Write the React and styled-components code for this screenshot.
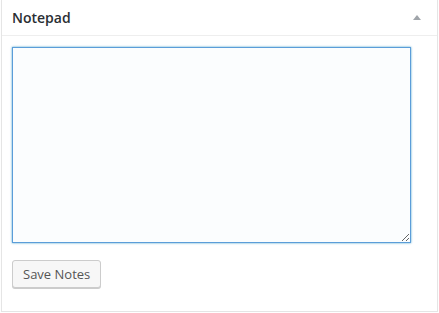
import React from 'react'
import styled, { createGlobalStyle } from 'styled-components'

const Global = createGlobalStyle`
  body {
    margin: 0;
    background: #fff;
    font-family: "Open Sans", "Liberation Sans", sans-serif;
  }
`

const Widget = styled.div`
  box-sizing: border-box;
  margin-left: 1px;
  width: 437px;
  height: 312px;
  background: #fff;
  border: 1px solid #e5e5e5;
  border-top: none;
  box-shadow: 0 1px 1px rgba(0, 0, 0, 0.04);
`

const Header = styled.div`
  display: flex;
  align-items: center;
  justify-content: space-between;
  height: 35px;
  padding: 0 10px;
  border-bottom: 1px solid #eee;
`

const Title = styled.h2`
  margin: 0;
  font-size: 14px;
  font-weight: 600;
  color: #2a2e33;
  line-height: 1.4;
`

const Toggle = styled.span`
  width: 0;
  height: 0;
  margin-right: 6px;
  border-left: 4px solid transparent;
  border-right: 4px solid transparent;
  border-bottom: 5px solid #a0a5aa;
`

const Inside = styled.div`
  display: flex;
  flex-direction: column;
  align-items: flex-start;
  padding: 11px 27px 0 10px;
  gap: 17px;
`

const Notes = styled.textarea`
  box-sizing: border-box;
  width: 399px;
  height: 196px;
  margin: 0;
  background: #fbfdfe;
  border: 1px solid #5b9dd9;
  box-shadow: 0 0 2px rgba(30, 140, 190, 0.8);
  outline: none;
  font-family: inherit;
  font-size: 14px;
  color: #32373c;
  resize: both;
`

const Button = styled.button`
  box-sizing: border-box;
  height: 28px;
  padding: 0 10px 1px;
  font-family: inherit;
  font-size: 13px;
  line-height: 26px;
  color: #555;
  background: #f7f7f7;
  border: 1px solid #ccc;
  border-radius: 3px;
  box-shadow: 0 1px 0 #ccc;
  cursor: pointer;
`

export default function App() {
  return (
    <>
      <Global />
      <Widget>
        <Header>
          <Title>Notepad</Title>
          <Toggle />
        </Header>
        <Inside>
          <Notes />
          <Button>Save Notes</Button>
        </Inside>
      </Widget>
    </>
  )
}
